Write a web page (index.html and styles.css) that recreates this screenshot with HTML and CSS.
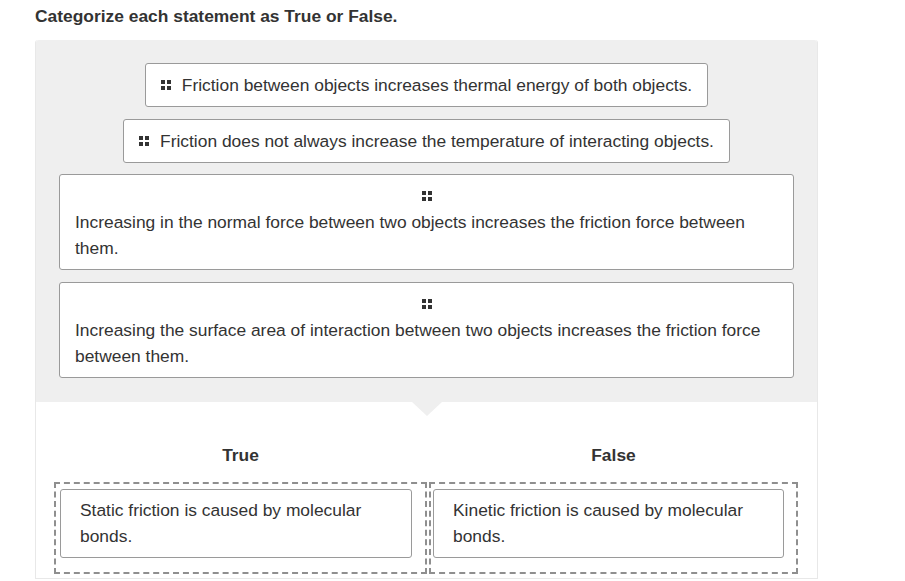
FILE: index.html
```html
<!DOCTYPE html>
<html>
<head>
<meta charset="utf-8">
<link rel="stylesheet" href="styles.css">
</head>
<body>
<h1 class="title">Categorize each statement as True or False.</h1>
<div class="panel">
  <div class="pool">
    <div class="card card-inline"><span class="grip"><i></i><i></i><i></i><i></i></span>Friction between objects increases thermal energy of both objects.</div>
    <div class="card card-inline"><span class="grip"><i></i><i></i><i></i><i></i></span>Friction does not always increase the temperature of interacting objects.</div>
    <div class="card card-block"><div class="grip-row"><span class="grip"><i></i><i></i><i></i><i></i></span></div>Increasing in the normal force between two objects increases the friction force between them.</div>
    <div class="card card-block"><div class="grip-row"><span class="grip"><i></i><i></i><i></i><i></i></span></div>Increasing the surface area of interaction between two objects increases the friction force between them.</div>
  </div>
  <div class="bins">
    <div class="bin">
      <div class="bin-title">True</div>
      <div class="drop drop-left">
        <div class="placed">Static friction is caused by molecular bonds.</div>
      </div>
    </div>
    <div class="bin">
      <div class="bin-title">False</div>
      <div class="drop drop-right">
        <div class="placed">Kinetic friction is caused by molecular bonds.</div>
      </div>
    </div>
  </div>
</div>
</body>
</html>
```
FILE: styles.css
```css
html, body {
  margin: 0;
  padding: 0;
  background: #ffffff;
}
body {
  font-family: "Liberation Sans", Arial, sans-serif;
  color: #333333;
  font-size: 17.4px;
  padding-top: 6px;
}
.title {
  margin: 0 0 14px 35px;
  font-size: 17.4px;
  line-height: 20px;
  font-weight: bold;
  color: #333333;
}
.panel {
  margin-left: 35px;
  width: 783px;
  box-sizing: border-box;
  border: 1px solid #e8e8e8;
  border-top: none;
  border-radius: 3px 3px 0 0;
}
.pool {
  position: relative;
  background: #efefef;
  padding: 23px 23px 24px 23px;
  display: flex;
  flex-direction: column;
  align-items: center;
  gap: 11.5px;
  border-radius: 3px 3px 0 0;
}
.pool::after {
  content: "";
  position: absolute;
  left: 50%;
  bottom: -14px;
  margin-left: -15px;
  border-left: 15px solid transparent;
  border-right: 15px solid transparent;
  border-top: 14px solid #efefef;
}
.card {
  background: #ffffff;
  border: 1px solid #9a9a9a;
  border-radius: 3px;
  padding: 8px 15px;
  line-height: 26px;
  box-sizing: border-box;
}
.card-inline {
  display: flex;
  align-items: center;
}
.card-block {
  align-self: stretch;
  text-align: left;
}
.grip-row {
  display: flex;
  justify-content: center;
  align-items: center;
  height: 26px;
}
.grip {
  display: inline-grid;
  grid-template-columns: 4px 4px;
  grid-template-rows: 4px 4px;
  gap: 2px;
  flex: none;
}
.card-inline .grip {
  margin-right: 11px;
}
.grip i {
  display: block;
  background: #333333;
}
.bins {
  display: grid;
  grid-template-columns: 373px 1fr;
  column-gap: 2px;
  padding: 40px 19px 4px 18px;
}
.bin-title {
  text-align: center;
  font-weight: bold;
  line-height: 26px;
  margin-bottom: 14px;
}
.drop {
  border: 2px dashed #8f8f8f;
  padding: 5px 12px 14px 2px;
}
.drop-left {
  padding-left: 4px;
  padding-right: 13px;
}
.placed {
  background: #ffffff;
  border: 1px solid #9a9a9a;
  border-radius: 3px;
  padding: 7.5px 19px;
  line-height: 26px;
}
```
